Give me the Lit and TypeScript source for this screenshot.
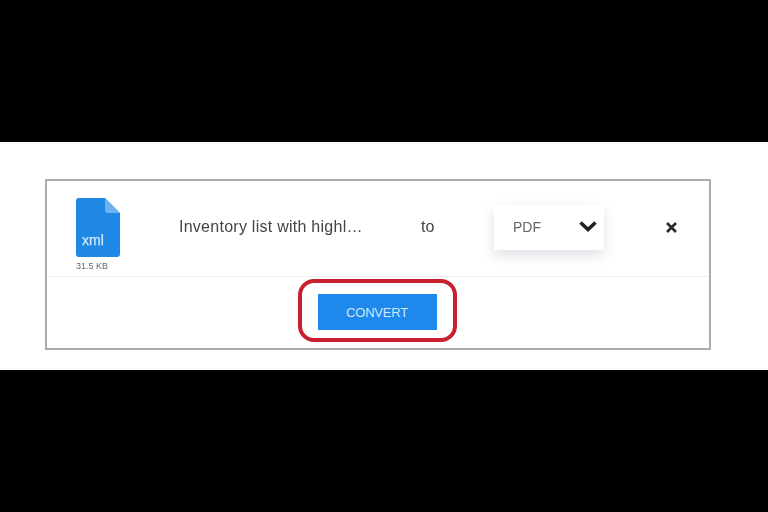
import { LitElement, html, css } from "lit";
import { customElement } from "lit/decorators.js";

@customElement("app-root")
export class AppRoot extends LitElement {
  static styles = css`
    :host { display: block; width: 768px; height: 512px; background: #000; font-family: "Liberation Sans", Arial, sans-serif; overflow: hidden; }
    .band { margin-top: 142px; height: 228px; background: #fff; padding: 37px 57px 20px 45px; box-sizing: border-box; }
    .card { height: 171px; border: 2px solid #ababab; box-sizing: border-box; display: flex; flex-direction: column; filter: blur(0.6px); }
    .row { height: 96px; flex: none; border-bottom: 1px solid #eeeeee; box-sizing: border-box; display: grid; grid-template-columns: 132px 242px 73px 110px 1fr; align-items: start; }
    .file { display: flex; flex-direction: column; align-items: flex-start; padding: 17px 0 0 29px; }
    .file svg { display: block; }
    .size { font-size: 9px; line-height: 10px; color: #666; margin-top: 4px; white-space: nowrap; }
    .name { font-size: 16px; line-height: 20px; color: #444; padding-top: 36px; white-space: nowrap; letter-spacing: 0.26px; }
    .to { font-size: 16px; line-height: 20px; color: #444; padding-top: 36px; }
    .select { margin-top: 24px; height: 45px; background: #fff; box-shadow: 0 5px 12px rgba(60, 70, 100, 0.16); display: flex; align-items: center; justify-content: space-between; padding: 0 6px 2px 19px; box-sizing: border-box; font-size: 14px; color: #666; }
    .close { display: flex; padding: 41px 0 0 62px; }
    .foot { flex: 1; display: flex; justify-content: center; align-items: flex-start; padding: 2px 2px 0 0; }
    .ring { display: flex; border: 4px solid #c9202f; border-radius: 16px; padding: 11px 16px 8px; }
    .btn { width: 119px; height: 36px; border: none; padding: 0; background: #1f88ec; color: #cfe6fb; font-family: inherit; font-size: 13px; letter-spacing: -0.2px; }
  `;

  render() {
    return html`
      <div class="band">
        <div class="card">
          <div class="row">
            <div class="file">
              <svg width="44" height="59" viewBox="0 0 44 59" aria-hidden="true">
                <path d="M3 0H29L44 15V56a3 3 0 0 1-3 3H3a3 3 0 0 1-3-3V3a3 3 0 0 1 3-3Z" fill="#1f88e5"/>
                <path d="M29 0L44 15H32a3 3 0 0 1-3-3Z" fill="#6db3f0"/>
                <text x="6" y="47" font-size="14" fill="#cfe6fb" stroke="#cfe6fb" stroke-width="0.25" font-family="Liberation Sans, sans-serif">xml</text>
              </svg>
              <div class="size">31.5 KB</div>
            </div>
            <div class="name">Inventory list with highl…</div>
            <div class="to">to</div>
            <div class="select">
              <span>PDF</span>
              <svg width="20" height="13" viewBox="0 0 20 13" aria-hidden="true">
                <path d="M2.5 2.5L10 9.5L17.5 2.5" fill="none" stroke="#222" stroke-width="3.6"/>
              </svg>
            </div>
            <div class="close">
              <svg width="11" height="11" viewBox="0 0 11 11" aria-hidden="true">
                <path d="M1 1L10 10M10 1L1 10" stroke="#2a2a2a" stroke-width="2.6"/>
              </svg>
            </div>
          </div>
          <div class="foot">
            <div class="ring"><button class="btn">CONVERT</button></div>
          </div>
        </div>
      </div>
    `;
  }
}
